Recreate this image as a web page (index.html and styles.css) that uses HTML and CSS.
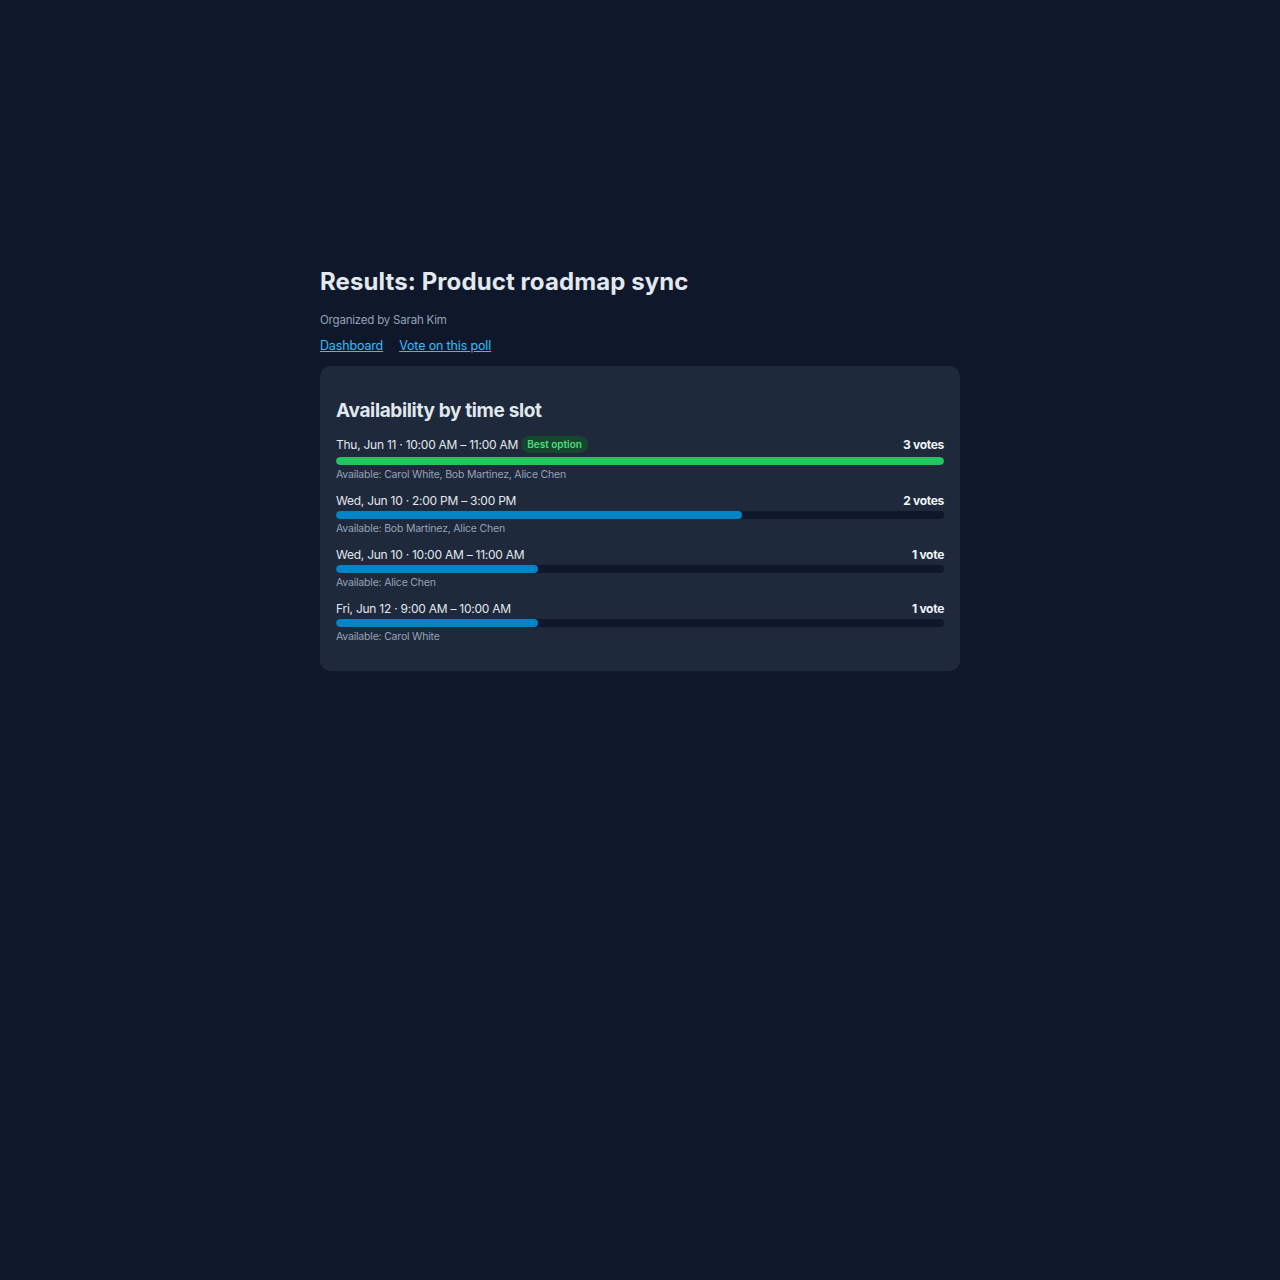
FILE: index.html
```html
<!DOCTYPE html>
<html lang="en">
<head>
    <meta charset="UTF-8">
    <meta name="viewport" content="width=device-width, initial-scale=1.0">
    <title>Results: Product roadmap sync</title>
    <link rel="stylesheet" href="styles.css">
</head>
<body>
    <div class="page">
        <h1 class="title">Results: Product roadmap sync</h1>
        <p class="organizer">Organized by Sarah Kim</p>
        <nav class="links">
            <a href="#">Dashboard</a>
            <a href="#">Vote on this poll</a>
        </nav>

        <section class="card">
            <h2 class="card-title">Availability by time slot</h2>
            <ul class="slots">
                <li class="slot slot-best">
                    <div class="slot-head">
                        <span class="slot-label">Thu, Jun 11 · 10:00 AM – 11:00 AM <span class="badge">Best option</span></span>
                        <span class="slot-votes">3 votes</span>
                    </div>
                    <div class="track"><div class="fill fill-best" style="width: 100%"></div></div>
                    <div class="slot-people">Available: Carol White, Bob Martinez, Alice Chen</div>
                </li>
                <li class="slot">
                    <div class="slot-head">
                        <span class="slot-label">Wed, Jun 10 · 2:00 PM – 3:00 PM</span>
                        <span class="slot-votes">2 votes</span>
                    </div>
                    <div class="track"><div class="fill" style="width: 66.7%"></div></div>
                    <div class="slot-people">Available: Bob Martinez, Alice Chen</div>
                </li>
                <li class="slot">
                    <div class="slot-head">
                        <span class="slot-label">Wed, Jun 10 · 10:00 AM – 11:00 AM</span>
                        <span class="slot-votes">1 vote</span>
                    </div>
                    <div class="track"><div class="fill" style="width: 33.3%"></div></div>
                    <div class="slot-people">Available: Alice Chen</div>
                </li>
                <li class="slot">
                    <div class="slot-head">
                        <span class="slot-label">Fri, Jun 12 · 9:00 AM – 10:00 AM</span>
                        <span class="slot-votes">1 vote</span>
                    </div>
                    <div class="track"><div class="fill" style="width: 33.3%"></div></div>
                    <div class="slot-people">Available: Carol White</div>
                </li>
            </ul>
        </section>
    </div>
</body>
</html>
```

FILE: styles.css
```css
body {
    font-family: 'Inter', 'Liberation Sans', sans-serif;
    background-color: #0f172a;
    color: #e2e8f0;
    margin: 0;
    padding: 0;
}

.page {
    width: 640px;
    margin: 0 auto;
    padding-top: 267px;
}

.title {
    font-size: 24px;
    line-height: 30px;
    font-weight: 700;
    letter-spacing: 0.1px;
    margin: 0 0 15px;
    color: #e2e8f0;
}

.organizer {
    font-size: 11.5px;
    line-height: 16px;
    letter-spacing: -0.2px;
    color: #94a3b8;
    margin: 0 0 9px;
}

.links {
    display: flex;
    gap: 16px;
    font-size: 12.5px;
    line-height: 18px;
    letter-spacing: -0.15px;
    margin-bottom: 11px;
}

.links a {
    color: #38bdf8;
    text-decoration: underline;
}

.card {
    background-color: #1e293b;
    border-radius: 10px;
    padding: 16px 16px 27px;
}

.card-title {
    font-size: 19px;
    line-height: 24px;
    font-weight: 700;
    letter-spacing: -0.35px;
    margin: 17px 0 11px;
}

.slots {
    list-style: none;
    margin: 0;
    padding: 0;
    display: flex;
    flex-direction: column;
    gap: 10px;
}

.slot-head {
    display: flex;
    justify-content: space-between;
    align-items: center;
    min-height: 18px;
    font-size: 12px;
    line-height: 18px;
}

.slot-best .slot-head {
    min-height: 22px;
}

.slot-label {
    color: #e2e8f0;
    letter-spacing: -0.25px;
}

.slot-votes {
    font-weight: 700;
    letter-spacing: -0.3px;
    color: #f1f5f9;
}

.badge {
    display: inline-block;
    padding: 2px 6px;
    border-radius: 999px;
    background-color: #15472f;
    color: #4ade80;
    font-size: 10px;
    line-height: 13px;
    font-weight: 600;
    letter-spacing: 0;
    vertical-align: 1px;
}

.track {
    margin-top: 1px;
    height: 8px;
    border-radius: 4px;
    background-color: #0f172a;
    overflow: hidden;
}

.fill {
    height: 100%;
    border-radius: 4px;
    background-color: #0284c7;
}

.fill-best {
    background-color: #22c55e;
}

.slot-people {
    margin-top: 3px;
    font-size: 10.5px;
    line-height: 14px;
    letter-spacing: -0.2px;
    color: #94a3b8;
}
```
